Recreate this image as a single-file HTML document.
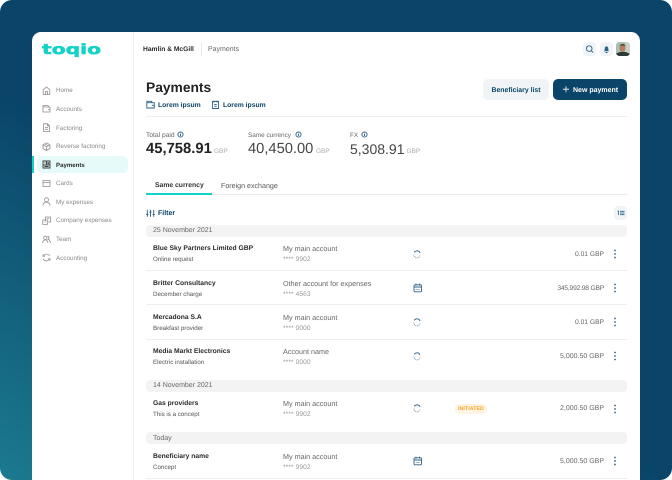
<!DOCTYPE html>
<html><head><meta charset="utf-8"><style>
html,body{margin:0;padding:0;background:#fff}
#p{position:relative;width:672px;height:480px;overflow:hidden;background:linear-gradient(210deg,#0a4468 0%,#0a4468 55%,#1b7a90 100%);border-radius:12px;font-family:"Liberation Sans",sans-serif;text-rendering:geometricPrecision}
#c{position:absolute;left:32px;top:32px;width:608px;height:448px;background:#fff;border-radius:9px 9px 0 0}
.t{position:absolute;white-space:nowrap;line-height:10px;height:10px;margin-top:1px;font-size:7px;color:#555}
.n{color:#8a8a8a;font-size:6.3px;left:56px}
.b{position:absolute}
.h{color:#2a2a2a;font-weight:bold;font-size:6.75px;left:153px}
.s{color:#555;font-size:6.2px;left:153px}
.a{color:#666;font-size:7.2px;left:283px}
.m{color:#999;font-size:6.6px;left:283px;letter-spacing:.1px}
.r{color:#666;font-size:6.7px;right:68px}
.g{color:#666;font-size:7px;left:153px}
.band{position:absolute;left:146px;width:481px;height:12px;background:#f3f3f3;border-radius:4px}
.line{position:absolute;left:146px;width:481px;height:1px;background:#eeeeee}
.l{color:#0a4468;font-weight:bold;font-size:6.8px}
svg{position:absolute;overflow:visible;fill:none}
svg.k{fill:#2f6286}
.gi{stroke:#8e8e8e;stroke-width:.8}
.bi{stroke:#2f6286;stroke-width:.9}
</style></head><body><div id="p"><div id="c"></div>
<div class="b" style="left:133px;top:32px;width:1px;height:448px;background:#f0f0f0"></div>

<svg style="left:42px;top:43px" width="60" height="16"><text x="0" y="11" font-family="DejaVu Sans" font-weight="bold" font-size="14" fill="#12d3c6" stroke="#12d3c6" stroke-width=".5" textLength="59" lengthAdjust="spacingAndGlyphs">toqio</text></svg>

<div class="t" style="left:143px;top:43.500px;color:#2a2a2a;font-weight:bold;font-size:6.700px">Hamlin &amp; McGill</div>
<div class="b" style="left:201px;top:42px;width:1px;height:14px;background:#e8e8e8"></div>
<div class="t" style="left:208px;top:43.500px;color:#666;font-size:7px">Payments</div>

<div class="b" style="left:583px;top:42px;width:13px;height:14px;background:#f0f4f7;border-radius:4px"></div>
<svg style="left:583px;top:42px" width="13" height="14" class="bi"><circle cx="6.200" cy="6.600" r="2.800"/><path d="M8.300 8.700l1.900 1.900"/></svg>
<div class="b" style="left:600px;top:42px;width:13px;height:14px;background:#f0f4f7;border-radius:4px"></div>
<svg style="left:600px;top:42px" width="13" height="14"><path d="M4 9.300c.8-.8.6-1.900.7-3 .1-1.200.8-1.900 1.800-1.900s1.700.7 1.800 1.900c.1 1.100-.1 2.200.7 3z" fill="#2f6286"/><rect x="5.500" y="10" width="2" height="1" fill="#2f6286"/></svg>
<svg style="left:616px;top:42px" width="14" height="14"><defs><clipPath id="av"><rect width="14" height="14" rx="3.500"/></clipPath></defs><g clip-path="url(#av)"><rect width="14" height="14" fill="#a9bfb2"/><rect x="9" width="5" height="14" fill="#c5d2cb"/><path d="M0 14V11.500L4 10h6l4 2v2z" fill="#2c3a36"/><ellipse cx="6.500" cy="6" rx="3" ry="4" fill="#b57d5f"/><path d="M3.500 4C4 1.500 9 1.200 9.700 4L9 3.500H4z" fill="#4a3a2c"/></g></svg>

<!-- sidebar -->
<div class="b" style="left:37px;top:156px;width:91px;height:17px;background:#e6fafa;border-radius:5px"></div>
<div class="b" style="left:32px;top:156px;width:2px;height:17px;background:#12d3c6"></div>
<svg style="left:42px;top:86px" width="9" height="9" class="gi"><path d="M1.200 8.500V3.800L4.500 1l3.300 2.800v4.700zM3.500 8.500V5.500h2v3"/></svg>
<div class="t n" style="top:85px">Home</div>
<svg style="left:42px;top:104px" width="9" height="9" class="gi"><path d="M1 8V1.500h5l.8 1.500H8V8zM1 3h5.800M6 5.500h2"/></svg>
<div class="t n" style="top:104px">Accounts</div>
<svg style="left:42px;top:123px" width="9" height="9" class="gi"><path d="M1.500 8.500V.8h4l2 2v5.700zM5.500.8v2h2M3 4.500h3M3 6.300h3"/></svg>
<div class="t n" style="top:122.500px">Factoring</div>
<svg style="left:42px;top:142px" width="9" height="9" class="gi"><path d="M4.500.8L8 2.800v3.700L4.500 8.500 1 6.500V2.800zM1 2.800l3.500 2 3.500-2M4.500 4.800v3.700M2.800 1.800l3.500 2"/></svg>
<div class="t n" style="top:141px">Reverse factoring</div>
<svg style="left:42px;top:160px" width="9" height="9"><path d="M1 1h7v7H1zM1 5h7M4.500 1v4M2.500 3h1M5.500 2.500l1.500 1.500M7 2.500L5.500 4M2.500 6.500h4" stroke="#3a3a3a" stroke-width=".9"/></svg>
<div class="t n" style="top:159.500px;color:#2a2a2a;font-weight:bold;font-size:6.100px">Payments</div>
<svg style="left:42px;top:179px" width="9" height="9" class="gi"><path d="M1 1.500h7v6H1zM1 3.600h7"/></svg>
<div class="t n" style="top:178px">Cards</div>
<svg style="left:42px;top:197px" width="9" height="9" class="gi"><circle cx="4.500" cy="2.800" r="2"/><path d="M1 8.500c.3-2.300 1.600-3.400 3.500-3.400S7.700 6.200 8 8.500"/></svg>
<div class="t n" style="top:196.500px">My expenses</div>
<svg style="left:42px;top:216px" width="9" height="9" class="gi"><path d="M3.500 5V1h5v5H6M.8 4h4.500v4.500H.8zM2.500 6h1M5 2.500h2"/></svg>
<div class="t n" style="top:215px">Company expenses</div>
<svg style="left:42px;top:235px" width="9" height="9" class="gi"><circle cx="3.300" cy="2.800" r="1.700"/><path d="M.6 8c.2-2 1.200-3 2.700-3s2.500 1 2.700 3M5.500 1.200c1.500 0 2.100 2.500.6 3.200 1.500.4 2.200 1.600 2.300 3.600"/></svg>
<div class="t n" style="top:234px">Team</div>
<svg style="left:42px;top:253px" width="9" height="9" class="gi"><path d="M7.800 3.200A3.500 3.500 0 0 0 1.500 3M1.200 5.800a3.500 3.500 0 0 0 6.300.2M1 1.200V3.200h2M8 7.800V5.800H6"/></svg>
<div class="t n" style="top:252.500px">Accounting</div>

<!-- title -->
<div class="t" style="left:146px;top:80px;height:14px;line-height:14px;font-size:13.800px;font-weight:bold;color:#222">Payments</div>
<svg style="left:146px;top:100px" width="9" height="9" class="bi"><path d="M.8 8V1.300h4.700l.8 1.400h2v5.300zM.8 2.700h5.500M5.800 5.300h2.400"/></svg>
<div class="t l" style="left:158px;top:99.500px">Lorem ipsum</div>
<svg style="left:211px;top:100px" width="9" height="9" class="bi"><path d="M1.500 1.500h6v7h-6zM3 .5v2M6 .5v2M3.300 4.500h2.400M3.300 6.300h2.400"/></svg>
<div class="t l" style="left:223px;top:99.500px">Lorem ipsum</div>

<div class="b" style="left:483px;top:79px;width:66px;height:21px;background:#f0f4f7;border-radius:5px"></div>
<div class="t l" style="left:491.500px;top:84.500px;font-size:6.900px">Beneficiary list</div>
<div class="b" style="left:553px;top:79px;width:74px;height:21px;background:#0a4468;border-radius:5px"></div>
<svg style="left:562px;top:85px" width="8" height="9" stroke="#fff" stroke-width=".8"><path d="M4 1.200v6M1 4.200h6"/></svg>
<div class="t" style="left:573px;top:84.500px;color:#fff;font-weight:bold">New payment</div>
<div class="line" style="top:116px"></div>

<!-- stats -->
<div class="t" style="left:146px;top:129.500px;font-size:6.700px;color:#666">Total paid</div>
<svg style="left:177px;top:131px" width="7" height="7" class="bi" stroke-width=".7"><circle cx="3.500" cy="3.500" r="2.600"/><path d="M3.500 3v2M3.500 1.800v.6"/></svg>
<div class="t" style="left:248px;top:129.500px;font-size:6.400px;color:#666">Same currency</div>
<svg style="left:295px;top:131px" width="7" height="7" class="bi" stroke-width=".7"><circle cx="3.500" cy="3.500" r="2.600"/><path d="M3.500 3v2M3.500 1.800v.6"/></svg>
<div class="t" style="left:350px;top:129.500px;font-size:6.400px;color:#666">FX</div>
<svg style="left:361px;top:131px" width="7" height="7" class="bi" stroke-width=".7"><circle cx="3.500" cy="3.500" r="2.600"/><path d="M3.500 3v2M3.500 1.800v.6"/></svg>
<div class="t" style="left:146px;top:140px;height:16px;line-height:16px;font-size:14.800px;font-weight:bold;color:#222">45,758.91</div>
<div class="t" style="left:214px;top:146px;font-size:6.500px;color:#aaa">GBP</div>
<div class="t" style="left:248px;top:140px;height:16px;line-height:16px;font-size:14.700px;color:#444">40,450.00</div>
<div class="t" style="left:316px;top:146px;font-size:6.500px;color:#aaa">GBP</div>
<div class="t" style="left:350px;top:140px;height:16px;line-height:16px;font-size:14px;color:#444">5,308.91</div>
<div class="t" style="left:406.500px;top:146px;font-size:6.500px;color:#aaa">GBP</div>

<!-- tabs -->
<div class="t" style="left:155px;top:179.500px;color:#333;font-weight:bold;font-size:6.800px">Same currency</div>
<div class="t" style="left:221px;top:179.500px;color:#555;font-size:7.100px">Foreign exchange</div>
<div class="line" style="top:194px;background:#eaeaea"></div>
<div class="b" style="left:146px;top:193px;width:66px;height:2px;background:#12d3c6"></div>

<!-- filter -->
<svg style="left:146px;top:209px" width="9" height="9" class="bi"><path d="M1.300.8v7M4.500.8v7M7.700.8v7M.2 5.500h2.200M3.400 3h2.200M6.600 5.500h2.200"/></svg>
<div class="t l" style="left:158px;top:207.500px;font-size:7px">Filter</div>
<div class="b" style="left:614px;top:206px;width:13px;height:14px;background:#f0f4f7;border-radius:4px"></div>
<svg style="left:614px;top:206px" width="13" height="14" stroke="#2f6286" stroke-width=".8"><path d="M3.500 5h1v4M6 5.300h4.500M6 7h4.500M6 8.700h4.500"/></svg>

<!-- group 1 -->
<div class="band" style="top:225px"></div>
<div class="t g" style="top:225px">25 November 2021</div>
<div class="t h" style="top:243px">Blue Sky Partners Limited GBP</div>
<div class="t s" style="top:254px">Online request</div>
<div class="t a" style="top:243px">My main account</div>
<div class="t m" style="top:254px">**** 9902</div>
<svg style="left:412px;top:249px" width="10" height="10" class="bi"><path d="M2.300 3.400A3.100 3.100 0 0 1 8 4"/><path d="M8 6.500A3.100 3.100 0 0 1 1.900 5.500" stroke="#7f9bb0" stroke-dasharray="1 .6"/></svg>
<div class="t r" style="top:248.500px">0.01 GBP</div>
<svg class="k" style="left:613px;top:249px" width="4" height="10"><circle cx="2" cy="1.500" r=".9"/><circle cx="2" cy="5" r=".9"/><circle cx="2" cy="8.500" r=".9"/></svg>
<div class="line" style="top:270px"></div>

<div class="t h" style="top:277.500px">Britter Consultancy</div>
<div class="t s" style="top:288.500px">December charge</div>
<div class="t a" style="top:277.500px">Other account for expenses</div>
<div class="t m" style="top:288.500px">**** 4563</div>
<svg style="left:412.500px;top:283px" width="10" height="10" class="bi"><rect x="1" y="1.800" width="7.500" height="7" rx="1"/><path d="M1 4h7.500M3 .6v2M6.500 .6v2"/><path d="M2.500 6.500h4.500" stroke="#9db5c6"/></svg>
<div class="t r" style="top:282.500px;font-size:6.700px;letter-spacing:-.2px">345,992.98 GBP</div>
<svg class="k" style="left:613px;top:283px" width="4" height="10"><circle cx="2" cy="1.500" r=".9"/><circle cx="2" cy="5" r=".9"/><circle cx="2" cy="8.500" r=".9"/></svg>
<div class="line" style="top:304px"></div>

<div class="t h" style="top:311.500px">Mercadona S.A</div>
<div class="t s" style="top:322.500px">Breakfast provider</div>
<div class="t a" style="top:311.500px">My main account</div>
<div class="t m" style="top:322.500px">**** 0000</div>
<svg style="left:412px;top:317px" width="10" height="10" class="bi"><path d="M2.300 3.400A3.100 3.100 0 0 1 8 4"/><path d="M8 6.500A3.100 3.100 0 0 1 1.900 5.500" stroke="#7f9bb0" stroke-dasharray="1 .6"/></svg>
<div class="t r" style="top:316.500px">0.01 GBP</div>
<svg class="k" style="left:613px;top:317px" width="4" height="10"><circle cx="2" cy="1.500" r=".9"/><circle cx="2" cy="5" r=".9"/><circle cx="2" cy="8.500" r=".9"/></svg>
<div class="line" style="top:339px"></div>

<div class="t h" style="top:346px">Media Markt Electronics</div>
<div class="t s" style="top:357px">Electric installation</div>
<div class="t a" style="top:346px">Account name</div>
<div class="t m" style="top:357px">**** 0000</div>
<svg style="left:412px;top:351px" width="10" height="10" class="bi"><path d="M2.300 3.400A3.100 3.100 0 0 1 8 4"/><path d="M8 6.500A3.100 3.100 0 0 1 1.900 5.500" stroke="#7f9bb0" stroke-dasharray="1 .6"/></svg>
<div class="t r" style="top:350.500px;font-size:7px">5,000.50 GBP</div>
<svg class="k" style="left:613px;top:351px" width="4" height="10"><circle cx="2" cy="1.500" r=".9"/><circle cx="2" cy="5" r=".9"/><circle cx="2" cy="8.500" r=".9"/></svg>

<!-- group 2 -->
<div class="band" style="top:380px"></div>
<div class="t g" style="top:380px">14 November 2021</div>
<div class="t h" style="top:398px">Gas providers</div>
<div class="t s" style="top:409px">This is a concept</div>
<div class="t a" style="top:398px">My main account</div>
<div class="t m" style="top:409px">**** 9902</div>
<svg style="left:412px;top:403px" width="10" height="10" class="bi"><path d="M2.300 3.400A3.100 3.100 0 0 1 8 4"/><path d="M8 6.500A3.100 3.100 0 0 1 1.900 5.500" stroke="#7f9bb0" stroke-dasharray="1 .6"/></svg>
<div class="b" style="left:455px;top:403.500px;width:32px;height:10px;background:#fff3e4;border-radius:4px"></div>
<div class="t" style="left:458px;top:402.500px;color:#f5a623;font-weight:bold;font-size:5.200px;letter-spacing:.1px">INITIATED</div>
<div class="t r" style="top:403px;font-size:7px">2,000.50 GBP</div>
<svg class="k" style="left:613px;top:403.500px" width="4" height="10"><circle cx="2" cy="1.500" r=".9"/><circle cx="2" cy="5" r=".9"/><circle cx="2" cy="8.500" r=".9"/></svg>

<!-- group 3 -->
<div class="band" style="top:432px"></div>
<div class="t g" style="top:432.500px">Today</div>
<div class="t h" style="top:450.500px">Beneficiary name</div>
<div class="t s" style="top:461.500px">Concept</div>
<div class="t a" style="top:450.500px">My main account</div>
<div class="t m" style="top:461.500px">**** 9902</div>
<svg style="left:412.500px;top:456px" width="10" height="10" class="bi"><rect x="1" y="1.800" width="7.500" height="7" rx="1"/><path d="M1 4h7.500M3 .6v2M6.500 .6v2"/><path d="M2.500 6.500h4.500" stroke="#9db5c6"/></svg>
<div class="t r" style="top:455.500px;font-size:7px">5,000.50 GBP</div>
<svg class="k" style="left:613px;top:456px" width="4" height="10"><circle cx="2" cy="1.500" r=".9"/><circle cx="2" cy="5" r=".9"/><circle cx="2" cy="8.500" r=".9"/></svg>
<div class="line" style="top:478px"></div>
</div></body></html>
